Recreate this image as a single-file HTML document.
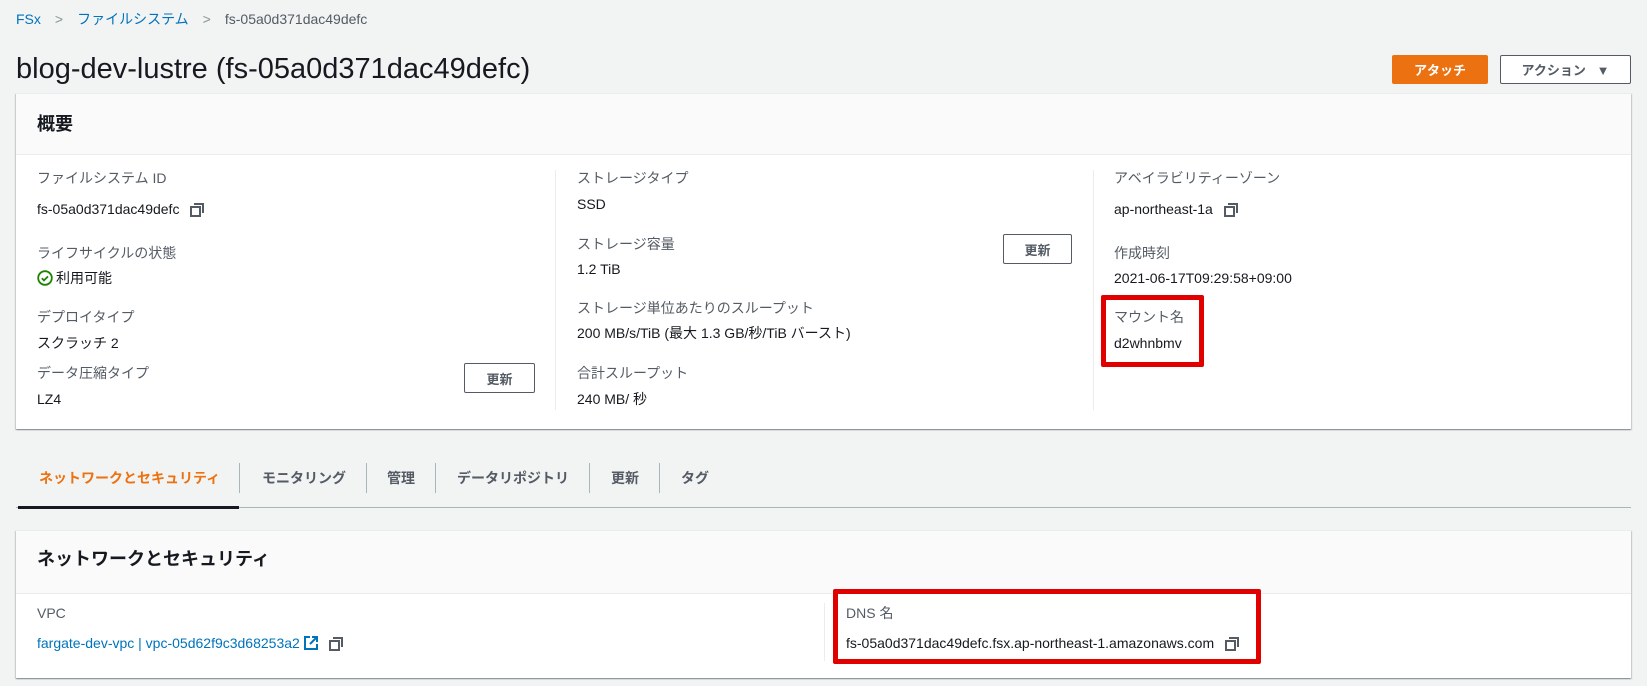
<!DOCTYPE html>
<html><head><meta charset="utf-8"><style>
*{margin:0;padding:0;box-sizing:border-box}
body{width:1647px;height:686px;background:#f2f3f3;font-family:"Liberation Sans","Noto Sans CJK JP",sans-serif;color:#16191f;position:relative;overflow:hidden;font-size:14px}
.a{position:absolute;white-space:nowrap;line-height:20px}
.lb{color:#545b64}
.lk{color:#0073bb}
.panel{position:absolute;background:#fff;box-shadow:0 1px 1px rgba(0,28,36,.3),1px 1px 1px rgba(0,28,36,.15),-1px 1px 1px rgba(0,28,36,.15);border-top:1px solid #eaeded}
.hd{position:absolute;left:0;right:0;top:0;background:#fafafa;border-bottom:1px solid #eaeded}
.btn{position:absolute;border:1px solid #545b64;background:#fff;font-weight:bold;font-size:13px;display:flex;align-items:center;justify-content:center;color:#545b64;border-radius:2px}
.vd{position:absolute;width:1px;background:#eaeded}
.red{position:absolute;border:5px solid #e00000;border-radius:2px}
.cp{display:inline-block;vertical-align:middle;margin-left:11px}
.tab{position:absolute;top:468px;font-weight:bold;color:#545b64;font-size:14px;line-height:20px}
.sep{position:absolute;top:463px;height:30px;width:1px;background:#aab7b8}
</style></head><body>
<div class="a" style="left:16px;top:9px;font-size:14px"><span class="lk">FSx</span><span style="color:#879596;margin:0 14px">&gt;</span><span class="lk">ファイルシステム</span><span style="color:#879596;margin:0 14px">&gt;</span><span class="lb">fs-05a0d371dac49defc</span></div>
<div class="a" style="left:16px;top:52px;font-size:29px;line-height:34px">blog-dev-lustre (fs-05a0d371dac49defc)</div>
<div class="btn" style="left:1392px;top:55px;width:96px;height:29px;background:#ec7211;border-color:#ec7211;color:#fff">アタッチ</div>
<div class="btn" style="left:1500px;top:55px;width:131px;height:29px;color:#545b64">アクション&nbsp;&nbsp;&nbsp;▼</div>

<div class="panel" style="left:16px;top:93px;width:1615px;height:336px">
 <div class="hd" style="height:61px"><div class="a" style="left:21px;top:19px;font-size:18px;font-weight:bold;line-height:22px">概要</div></div>
</div>
<div class="vd" style="left:555px;top:170px;height:240px"></div>
<div class="vd" style="left:1093px;top:170px;height:240px"></div>

<div class="a lb" style="left:37px;top:168px">ファイルシステム ID</div>
<div class="a" style="left:37px;top:199px">fs-05a0d371dac49defc<svg class="cp" width="14" height="14" viewBox="0 0 14 14"><path d="M4 1h9v9M1 4h9v9H1z" fill="none" stroke="#545b64" stroke-width="2"/></svg></div>
<div class="a lb" style="left:37px;top:243px">ライフサイクルの状態</div>
<div class="a" style="left:37px;top:268px"><svg width="16" height="16" viewBox="0 0 16 16" style="vertical-align:-3px;margin-right:3px"><circle cx="8" cy="8" r="6.8" fill="none" stroke="#1d8102" stroke-width="1.8"/><path d="M4.8 8.2l2.2 2.2 4-4" fill="none" stroke="#1d8102" stroke-width="1.8"/></svg>利用可能</div>
<div class="a lb" style="left:37px;top:307px">デプロイタイプ</div>
<div class="a" style="left:37px;top:333px">スクラッチ 2</div>
<div class="a lb" style="left:37px;top:363px">データ圧縮タイプ</div>
<div class="a" style="left:37px;top:389px">LZ4</div>
<div class="btn" style="left:464px;top:363px;width:71px;height:30px">更新</div>

<div class="a lb" style="left:577px;top:168px">ストレージタイプ</div>
<div class="a" style="left:577px;top:194px">SSD</div>
<div class="a lb" style="left:577px;top:234px">ストレージ容量</div>
<div class="a" style="left:577px;top:259px">1.2 TiB</div>
<div class="btn" style="left:1003px;top:234px;width:69px;height:30px">更新</div>
<div class="a lb" style="left:577px;top:298px">ストレージ単位あたりのスループット</div>
<div class="a" style="left:577px;top:323px">200 MB/s/TiB (最大 1.3 GB/秒/TiB バースト)</div>
<div class="a lb" style="left:577px;top:363px">合計スループット</div>
<div class="a" style="left:577px;top:389px">240 MB/ 秒</div>

<div class="a lb" style="left:1114px;top:168px">アベイラビリティーゾーン</div>
<div class="a" style="left:1114px;top:199px">ap-northeast-1a<svg class="cp" width="14" height="14" viewBox="0 0 14 14"><path d="M4 1h9v9M1 4h9v9H1z" fill="none" stroke="#545b64" stroke-width="2"/></svg></div>
<div class="a lb" style="left:1114px;top:243px">作成時刻</div>
<div class="a" style="left:1114px;top:268px">2021-06-17T09:29:58+09:00</div>
<div class="red" style="left:1101px;top:295px;width:103px;height:72px"></div>
<div class="a lb" style="left:1114px;top:307px">マウント名</div>
<div class="a" style="left:1114px;top:333px">d2whnbmv</div>

<div class="tab" style="left:39px;color:#ec7211">ネットワークとセキュリティ</div>
<div class="sep" style="left:239px"></div>
<div class="tab" style="left:262px">モニタリング</div>
<div class="sep" style="left:366px"></div>
<div class="tab" style="left:387px">管理</div>
<div class="sep" style="left:435px"></div>
<div class="tab" style="left:457px">データリポジトリ</div>
<div class="sep" style="left:589px"></div>
<div class="tab" style="left:611px">更新</div>
<div class="sep" style="left:659px"></div>
<div class="tab" style="left:681px">タグ</div>
<div style="position:absolute;left:16px;top:507px;width:1615px;height:1px;background:#aab7b8"></div>
<div style="position:absolute;left:18px;top:506px;width:221px;height:3px;background:#16191f"></div>

<div class="panel" style="left:16px;top:530px;width:1615px;height:148px">
 <div class="hd" style="height:63px"><div class="a" style="left:21px;top:17px;font-size:18px;font-weight:bold;line-height:22px">ネットワークとセキュリティ</div></div>
</div>
<div class="vd" style="left:824px;top:603px;height:58px"></div>
<div class="a lb" style="left:37px;top:603px">VPC</div>
<div class="a lk" style="left:37px;top:633px">fargate-dev-vpc | vpc-05d62f9c3d68253a2<svg style="vertical-align:-2px;margin-left:4px" width="14" height="14" viewBox="0 0 14 14"><path d="M6 1H1v12h12V8M8 1h5v5M13 1L6 8" fill="none" stroke="#0073bb" stroke-width="2"/></svg><svg class="cp" width="14" height="14" viewBox="0 0 14 14"><path d="M4 1h9v9M1 4h9v9H1z" fill="none" stroke="#545b64" stroke-width="2"/></svg></div>
<div class="red" style="left:833px;top:589px;width:428px;height:75px"></div>
<div class="a lb" style="left:846px;top:603px">DNS 名</div>
<div class="a" style="left:846px;top:633px">fs-05a0d371dac49defc.fsx.ap-northeast-1.amazonaws.com<svg class="cp" width="14" height="14" viewBox="0 0 14 14"><path d="M4 1h9v9M1 4h9v9H1z" fill="none" stroke="#545b64" stroke-width="2"/></svg></div>
</body></html>
